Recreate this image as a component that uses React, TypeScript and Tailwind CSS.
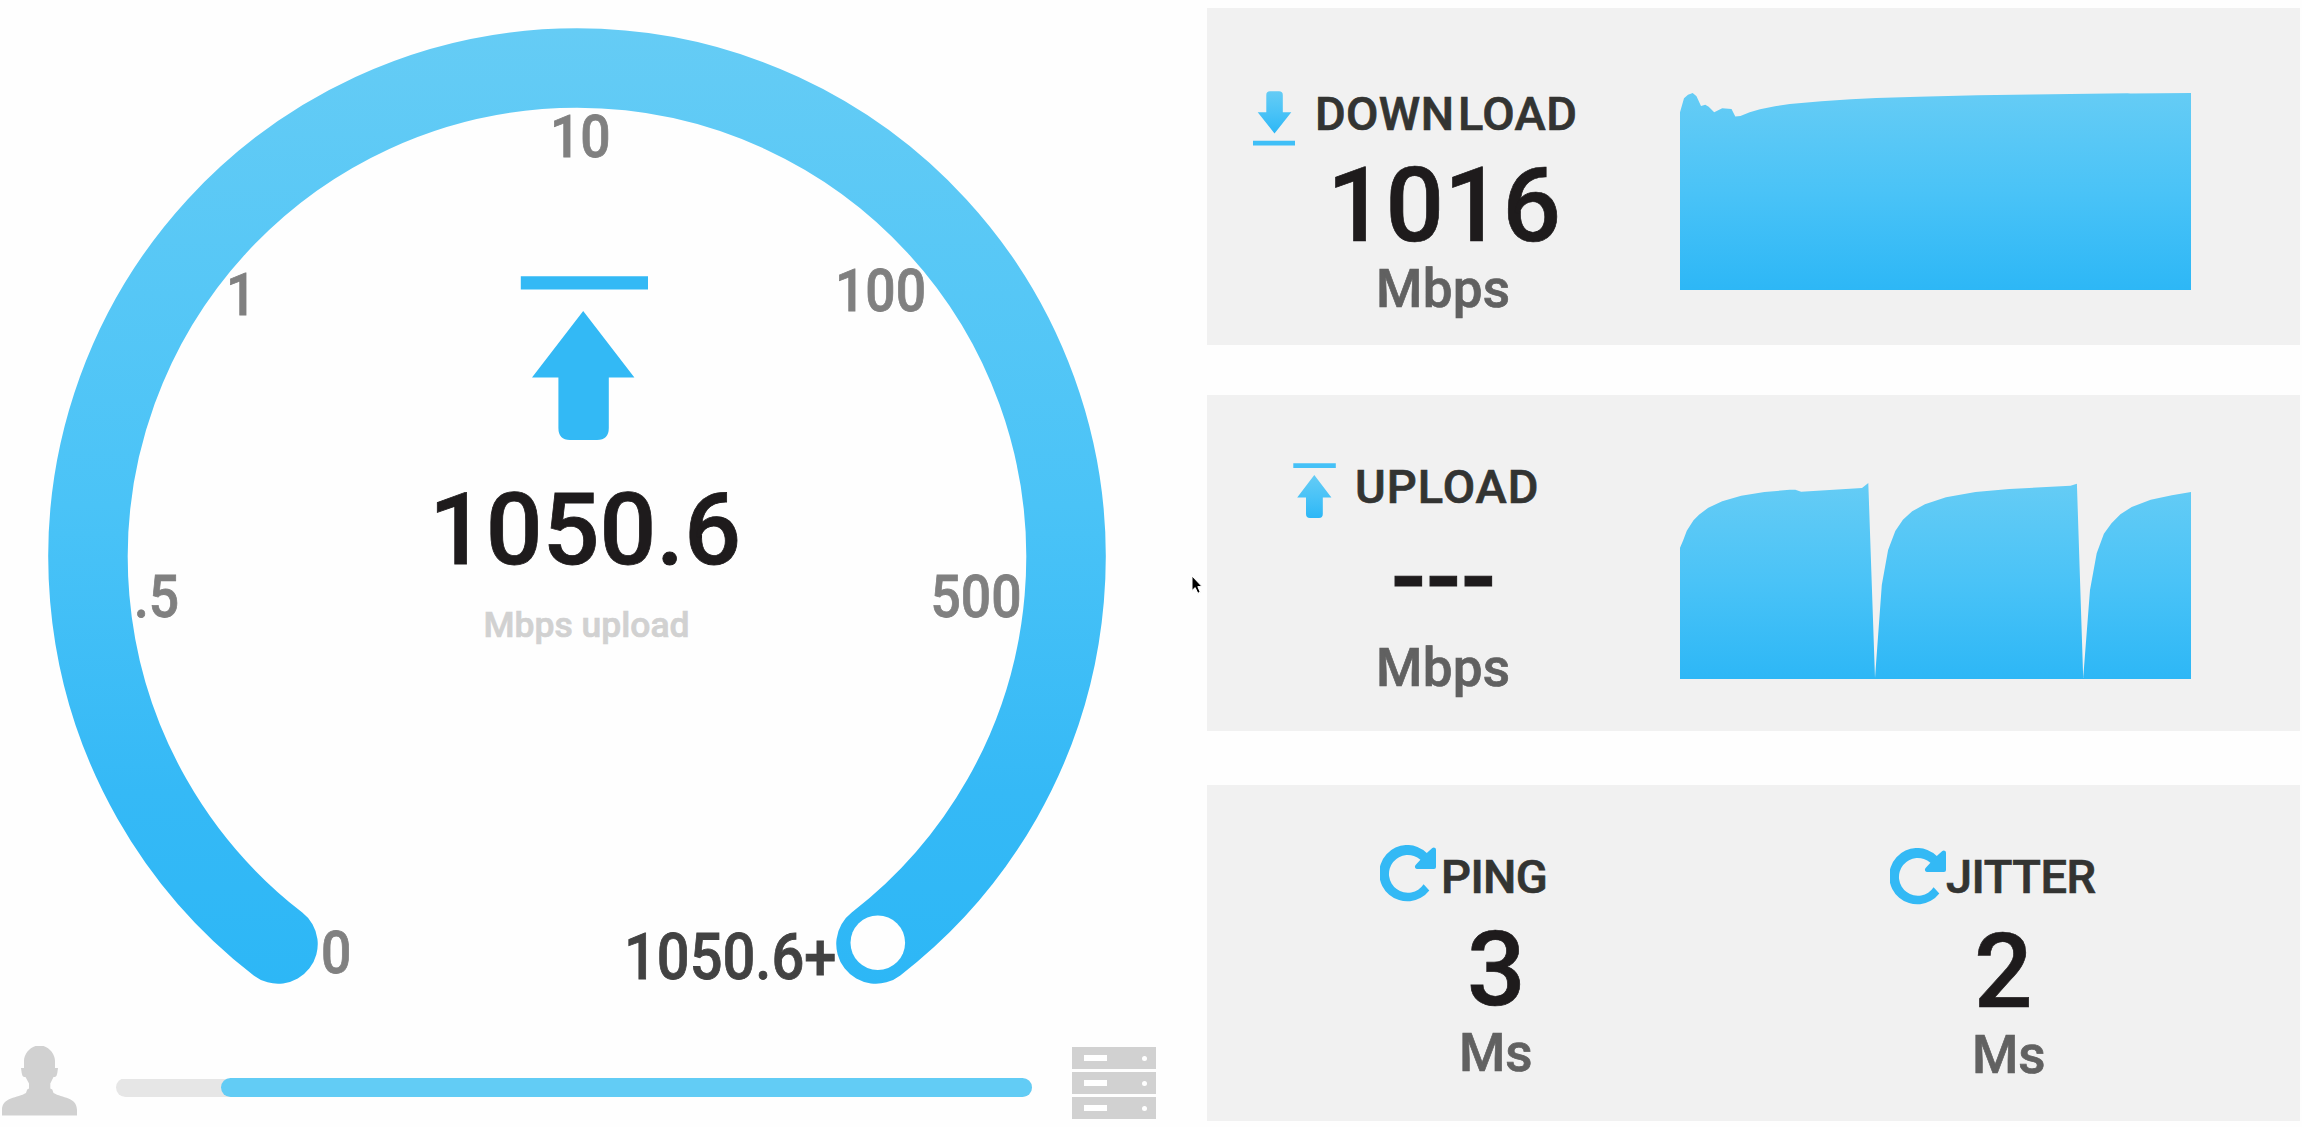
type Label = { text: string; x: number; y: number };

const scaleLabels: Label[] = [
  { text: "0", x: 321, y: 973 },
  { text: ".5", x: 134, y: 617 },
  { text: "1", x: 226, y: 315 },
  { text: "10", x: 550, y: 157 },
  { text: "100", x: 835, y: 311 },
  { text: "500", x: 930.5, y: 617 },
];

const downloadPath =
  "M0 19.3 L4 5.3 L8 1.7 L12.7 0 L16.5 3.3 L21 13 L25.3 11.7 L28.7 13.7 L34.2 19.3 L42.2 15.3 L51.5 16 L55.3 23.5 L60.4 23 L69.7 19.3 L80 16.3 L95 13.3 L109.8 11 L141.4 8.3 L171 6.3 L196.3 5 L238.5 3.7 L297.6 2.3 L352.5 1.4 L447.5 0.2 L450.5 0.6 L511 0 V197 H0 Z";

const uploadPath =
  "M0 64.7 L3 57.7 L6.8 47.7 L13.5 37.3 L19 31.7 L28.3 24.7 L42.2 18.3 L61.2 12.7 L84.4 9 L109.8 6.8 L115.3 6.8 L121.2 8.7 L182 5 L188.3 0 L195 195 L201.8 102 L208.1 67 L215.3 48 L222.9 36.7 L232.2 28.3 L244.9 21.3 L266 14.3 L295.5 9 L329.3 6 L390.5 2.7 L396.9 0.7 L403.2 195 L410 107 L416.7 70.3 L423.9 50.7 L431.5 40.3 L440.4 31.3 L451.7 24 L470.7 16.7 L491.9 12.3 L511 9 V196 H0 Z";

const Gauge = () => (
  <div className="relative h-[1040px] w-[1180px]">
    <svg viewBox="0 0 1180 1040" className="block h-[1040px] w-[1180px]">
      <defs>
        <linearGradient id="ring" gradientUnits="userSpaceOnUse" x1="0" y1="28" x2="0" y2="984">
          <stop offset="0" stopColor="#65ccf5" />
          <stop offset="0.5" stopColor="#4ac3f7" />
          <stop offset="0.8" stopColor="#35b9f6" />
          <stop offset="1" stopColor="#2db7f6" />
        </linearGradient>
      </defs>
      <path
        d="M278 944 A489 489 0 1 1 876 944"
        fill="none"
        stroke="url(#ring)"
        strokeWidth="79.5"
        strokeLinecap="round"
      />
      <circle cx="877.8" cy="942.8" r="27.3" fill="#fefefe" />
      <g fontFamily="Roboto, sans-serif" fontWeight="500" fontSize="59" strokeWidth="0.8">
        {scaleLabels.map(({ text, x, y }) => (
          <text key={text} transform={`translate(${x} ${y}) scale(0.905 1)`} fill="#808080" stroke="#808080">
            {text}
          </text>
        ))}
        <text transform="translate(624 979) scale(0.903 1)" fontSize="64" fill="#424242" stroke="#424242">
          1050.6+
        </text>
      </g>
    </svg>

    {/* Current reading */}
    <div className="absolute left-[434px] top-[276px] flex w-[302px] flex-col items-center">
      <svg viewBox="0 0 128 164" className="h-[164px] w-[128px] -translate-x-px" fill="#33b9f5">
        <path d="M0.8 0.2H128V13.6H0.8Z" />
        <path d="M63.2 35L114.4 101.5H88.8V152Q88.8 164 77 164H50Q38.4 164 38.4 152V101.5H12Z" />
      </svg>
      <div className="mt-[40px] text-[100px] leading-[100px] text-[#1e1b1c] [-webkit-text-stroke:0.8px]">1050.6</div>
      <div className="mt-[25px] pl-[3px] text-[35.5px] leading-[40px] text-[#d1d1d1] [-webkit-text-stroke:0.7px]">
        Mbps upload
      </div>
    </div>
  </div>
);

const UserIcon = () => (
  <svg viewBox="0 0 75 70" className="h-[70px] w-[75px]" fill="#d1d1d1">
    <path d="M33.5 0H41.5C48 2 53 8.5 53 15V22H56L55.3 27Q55 30 53 31L51.5 31L48.3 37.5V42.5L50.3 43.5L51.5 47C60 52 75 51 75 64V69.5H0V64C0 51 16 52 24 47L25.2 43.5L27 42.5V37.5L23.5 31L22 31Q20 30 19.7 27L19 22H22V15C22 8.5 27 2 33.5 0Z" />
  </svg>
);

const ServerIcon = () => (
  <div className="flex flex-col gap-[3px]">
    {[0, 1, 2].map((i) => (
      <div key={i} className="flex h-[22px] w-[84px] items-center justify-between bg-[#d1d1d1] pl-3 pr-[9px]">
        <div className="h-[6px] w-[23px] bg-white" />
        <div className="h-[5px] w-[5px] rounded-full bg-white" />
      </div>
    ))}
  </div>
);

const Connection = () => (
  <div className="flex h-[87px] items-start pl-[2px]">
    <div className="pt-[6px]">
      <UserIcon />
    </div>
    <div className="ml-[39px] mt-[38px] flex h-[19px] w-[916px] justify-end rounded-full bg-[linear-gradient(#fefefe_1px,#e6e6e6_1px)]">
      <div className="h-[19px] w-[811px] rounded-full bg-[#62ccf5]" />
    </div>
    <div className="ml-[40px] pt-[7px]">
      <ServerIcon />
    </div>
  </div>
);

const Gradient = ({ id }: { id: string }) => (
  <defs>
    <linearGradient id={id} x1="0" y1="0" x2="0" y2="1">
      <stop offset="0" stopColor="#65ccf5" />
      <stop offset="0.5" stopColor="#4ac3f7" />
      <stop offset="1" stopColor="#2db7f6" />
    </linearGradient>
  </defs>
);

const DownloadIcon = () => (
  <svg viewBox="0 0 42 55" className="h-[55px] w-[42px]">
    <Gradient id="down" />
    <path
      d="M17 0.3H26Q29.8 0.3 29.8 4V21.2H38.3L21.5 42.5L4.7 21.2H13.3V4Q13.3 0.3 17 0.3Z"
      fill="url(#down)"
    />
    <path d="M0 49.8H42V54.6H0Z" fill="#3fbff7" />
  </svg>
);

const UploadIcon = () => (
  <svg viewBox="0 0 43 55" className="h-[55px] w-[43px]">
    <Gradient id="up" />
    <path d="M0.3 0.2H42.8V5H0.3Z" fill="#45c1f7" />
    <path
      d="M21.3 12L38.4 34.4H29.8V51Q29.8 55 26 55H17Q13 55 13 51V34.4H4.2Z"
      fill="url(#up)"
    />
  </svg>
);

const RefreshIcon = () => (
  <svg viewBox="0 0 56 57" className="h-[57px] w-[56px]" fill="#33b9f5">
    <path d="M46.8 8L52.3 3Q53.8 1.8 55.2 3Q56 3.6 56 5V22Q56 24 54 24H37.5Q35.6 24 35 22.5Q34.6 21 35.8 19.7L40.4 14.7A18.9 18.9 0 1 0 43.6 39.3L49.3 45.5A28 28.2 0 1 1 46.8 8Z" />
  </svg>
);

const Chart = ({ id, d }: { id: string; d: string }) => (
  <svg viewBox="0 0 511 197" className="h-[197px] w-[511px]">
    <Gradient id={id} />
    <path d={d} fill={`url(#${id})`} />
  </svg>
);

export default function App() {
  return (
    <div className="relative flex h-[1127px] w-[2302px] overflow-hidden bg-[#fefefe] font-['Roboto',sans-serif] font-medium">
      <div className="w-[1207px] shrink-0">
        <Gauge />
        <Connection />
      </div>

      <div className="w-[1093px] pt-[8px] [-webkit-text-stroke:0.7px]">
        {/* Download */}
        <section className="flex h-[337px] bg-[#f1f1f1]">
          <div className="w-[473px] shrink-0 pt-[81px]">
            <div className="flex h-[50px] items-center pl-[46px]">
              <div className="pt-[9px]">
                <DownloadIcon />
              </div>
              <div className="ml-[20px] whitespace-nowrap text-[47px] leading-[50px] tracking-[0.4px] text-[#333432]">
                DOW<span className="tracking-[4px]">N</span>LOAD
              </div>
            </div>
            <div className="mt-[17px] pl-[120px] text-[103px] leading-[100px] text-[#1e1b1c]">1016</div>
            <div className="mt-[8px] pl-[169px] text-[53px] leading-[50px] tracking-[0.3px] text-[#616161]">Mbps</div>
          </div>
          <div className="pt-[85px]">
            <Chart id="download" d={downloadPath} />
          </div>
        </section>

        {/* Upload */}
        <section className="mt-[50px] flex h-[336px] bg-[#f1f1f1]">
          <div className="w-[473px] shrink-0 pt-[67px]">
            <div className="flex h-[50px] items-center pl-[86px]">
              <div className="pt-[7px]">
                <UploadIcon />
              </div>
              <div className="ml-[19px] text-[47px] leading-[50px] tracking-[1px] text-[#333432]">UPLOAD</div>
            </div>
            <div className="mt-[16px] pl-[184px] text-[103px] leading-[100px] text-[#1e1b1c] [-webkit-text-stroke:1px]">
              ---
            </div>
            <div className="mt-[15px] pl-[169px] text-[53px] leading-[50px] tracking-[0.3px] text-[#616161]">Mbps</div>
          </div>
          <div className="pt-[88px]">
            <Chart id="upload" d={uploadPath} />
          </div>
        </section>

        {/* Latency */}
        <section className="mt-[54px] flex h-[336px] bg-[#f1f1f1]">
          <div className="w-[510px] shrink-0 pt-[67px]">
            <div className="flex h-[50px] pl-[173px]">
              <div className="-mt-[7px]">
                <RefreshIcon />
              </div>
              <div className="ml-[5px] text-[47px] leading-[50px] tracking-[-0.6px] text-[#333432]">PING</div>
            </div>
            <div className="mt-[18px] pl-[260px] text-[103px] leading-[100px] text-[#1e1b1c]">3</div>
            <div className="mt-[8px] pl-[252px] text-[53px] leading-[50px] text-[#616161]">Ms</div>
          </div>
          <div className="pt-[67px]">
            <div className="flex h-[50px] pl-[173px]">
              <div className="-mt-[4px]">
                <RefreshIcon />
              </div>
              <div className="text-[47px] leading-[50px] tracking-[-0.5px] text-[#333432]">JITTER</div>
            </div>
            <div className="mt-[20px] pl-[257px] text-[103px] leading-[100px] text-[#1e1b1c]">2</div>
            <div className="mt-[8px] pl-[255px] text-[53px] leading-[50px] text-[#616161]">Ms</div>
          </div>
        </section>
      </div>

      {/* Mouse pointer */}
      <svg viewBox="0 0 14 22" className="absolute left-[1190px] top-[574px] h-[22px] w-[14px]">
        <path
          d="M2 2V16.5L5.2 13.6L7.8 19.3L10.2 18.2L7.8 12.6H12Z"
          fill="#000"
          stroke="#fff"
          strokeWidth="1"
        />
      </svg>
    </div>
  );
}
